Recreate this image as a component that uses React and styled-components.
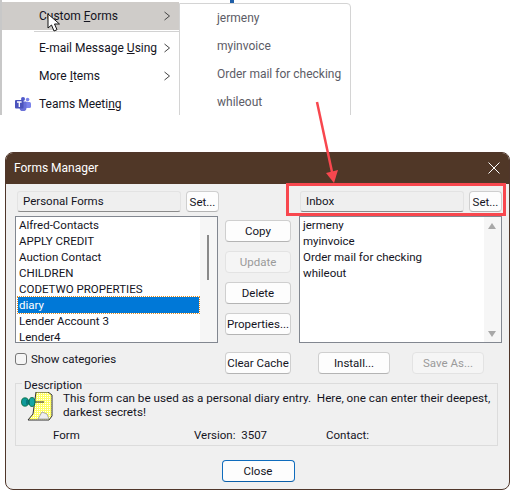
import React from "react";
import styled, { createGlobalStyle } from "styled-components";

const Global = createGlobalStyle`
  html, body {
    margin: 0;
    padding: 0;
    background: #fff;
  }
  body {
    font-family: Roboto, "Noto Sans", "Liberation Sans", sans-serif;
    font-size: 12px;
    color: #14141e;
  }
`;

const Page = styled.div`
  position: relative;
  width: 510px;
  height: 490px;
  overflow: hidden;
  background: #fff;
`;

const MenuArea = styled.div`
  position: relative;
  display: flex;
  height: 115px;
  overflow: hidden;
`;

const BehindStrip = styled.div`
  position: absolute;
  top: -10px;
  left: 230px;
  display: flex;
  align-items: flex-end;
  height: 13px;
  font-weight: 500;
  color: #1f4e8c;
  white-space: nowrap;
`;

const BehindBlock = styled.span`
  width: 4px;
  height: 3px;
  margin-right: 24px;
  background: #1f5fa8;
`;

const BehindWord = styled.span`
  margin-right: 20px;
`;

const MainMenu = styled.div`
  width: 177px;
  padding-top: 2px;
  border-left: 2px solid #c8c8c8;
  background: #fff;
`;

const MenuRow = styled.div`
  display: grid;
  grid-template-columns: 37px 1fr 16px;
  align-items: center;
  height: 28px;
  background: ${(p) => (p.$active ? "#cfccc9" : "transparent")};
  white-space: nowrap;
`;

const MenuIcon = styled.span`
  display: flex;
  justify-content: flex-end;
  padding-right: 8px;
`;

const Sep = styled.div`
  height: 1px;
  margin: 1px 0 2px 32px;
  background: #d2d2d2;
`;

const SubMenu = styled.div`
  position: relative;
  width: 172px;
  height: 120px;
  margin-top: 3px;
  box-sizing: border-box;
  padding-left: 37px;
  background: #fff;
  border: 1px solid #d4d4d4;
  border-top-right-radius: 4px;
`;

const SubRow = styled.div`
  height: 28px;
  line-height: 28px;
  color: #5c5c66;
  white-space: nowrap;
`;

const Dialog = styled.div`
  width: 505px;
  height: 338px;
  margin: 37px 0 0 5px;
  box-sizing: border-box;
  background: #f0f0f0;
  border: 1px solid #50362a;
  border-radius: 8px;
  overflow: hidden;
  font-size: 11.5px;
`;

const TitleBar = styled.div`
  display: flex;
  align-items: center;
  justify-content: space-between;
  height: 31px;
  padding: 0 9px 2px 8px;
  box-sizing: border-box;
  background: #503727;
  color: #fff;
  font-size: 12px;
`;

const Body = styled.div`
  padding: 7px 7px 0 9px;
`;

const Columns = styled.div`
  display: grid;
  grid-template-columns: 204px 80px 204px;
`;

const FormColumn = styled.div`
  display: flex;
  flex-direction: column;
  gap: 4px;
`;

const FieldRow = styled.div`
  display: flex;
  gap: 5px;
  padding-left: ${(p) => (p.$inset ? "1px" : "2px")};
`;

const Field = styled.div`
  width: 164px;
  height: 21px;
  box-sizing: border-box;
  padding-left: 5px;
  line-height: 19px;
  background: #efefef;
  border: 1px solid #e3e3e3;
  border-bottom: 1px solid #8a8a8a;
  border-radius: 3px;
  white-space: nowrap;
`;

const Button = styled.div`
  display: flex;
  align-items: center;
  justify-content: center;
  width: ${(p) => p.$w || 66}px;
  height: 22px;
  box-sizing: border-box;
  border: 1px solid ${(p) =>
    p.$primary ? "#0f6cbd" : p.$off ? "#e3e3e3" : "#cfcfcf"};
  border-bottom-color: ${(p) =>
    p.$primary ? "#0a5ea8" : p.$off ? "#e3e3e3" : "#b4b4b4"};
  border-radius: 4px;
  color: ${(p) => (p.$off ? "#9a9a9a" : "#14141e")};
  background: ${(p) => (p.$off ? "#f5f5f5" : "#fdfdfd")};
  white-space: nowrap;
`;

const SmallButton = styled(Button)`
  width: 33px;
  height: 21px;
`;

const ListBox = styled.div`
  position: relative;
  width: 203px;
  height: 127px;
  box-sizing: border-box;
  padding: 0 1px;
  background: #fff;
  border: 1px solid #828790;
  overflow: hidden;
`;

const ListItem = styled.div`
  height: 16px;
  line-height: 16px;
  padding-left: 2px;
  white-space: nowrap;
  ${(p) =>
    p.$selected &&
    `
    width: 180px;
    margin-left: 1px;
    padding-left: 1px;
    color: #fff;
    background: #0078d7;
    outline: 1px dotted #e08a1e;
  `}
`;

const ScrollTrack = styled.div`
  position: absolute;
  top: 0;
  right: 0;
  bottom: 0;
  width: 17px;
  background: #f6f6f6;
`;

const ScrollThumb = styled.div`
  position: absolute;
  top: 18px;
  left: 7px;
  width: 2px;
  height: 45px;
  background: #8a8a8a;
`;

const ArrowUp = styled.div`
  position: absolute;
  left: 4px;
  ${(p) => (p.$down ? "bottom: 5px;" : "top: 6px;")}
  width: 0;
  height: 0;
  border-left: 4px solid transparent;
  border-right: 4px solid transparent;
  ${(p) => (p.$down ? "border-top" : "border-bottom")}: 6px solid #a8a8a8;
`;

const ActionColumn = styled.div`
  display: flex;
  flex-direction: column;
  gap: 9px;
  padding: 29px 0 0 6px;
`;

const BottomRow = styled.div`
  display: grid;
  grid-template-columns: 210px 93px 94px 72px;
  align-items: center;
  height: 22px;
  margin-top: 9px;
`;

const CheckLabel = styled.label`
  display: flex;
  align-items: center;
  gap: 4px;
  margin-top: -8px;
`;

const CheckBox = styled.span`
  width: 10px;
  height: 10px;
  background: #f5f5f5;
  border: 1px solid #777;
  border-radius: 3px;
`;

const GroupBox = styled.div`
  position: relative;
  width: 483px;
  height: 63px;
  box-sizing: border-box;
  margin: 9px 0 0;
  padding: 7px 0 0 5px;
  border: 1px solid #dcdcdc;
`;

const GroupLabel = styled.span`
  position: absolute;
  top: -6px;
  left: 6px;
  padding: 0 2px;
  line-height: 14px;
  background: #f0f0f0;
`;

const DescRow = styled.div`
  display: flex;
  gap: 10px;
  height: 36px;
`;

const DescText = styled.div`
  width: 434px;
  margin-top: 1px;
  font-size: 11.7px;
  line-height: 13.5px;
  white-space: pre;
`;

const MetaRow = styled.div`
  display: grid;
  grid-template-columns: 141px 132px 1fr;
  padding-left: 32px;
  line-height: 16px;
  white-space: pre;
`;

const Footer = styled.div`
  display: flex;
  justify-content: center;
  margin: 14px 0 0 -1px;
`;

const Overlay = styled.svg`
  position: absolute;
  left: 0;
  top: 0;
  pointer-events: none;
`;

const HighlightBox = styled.div`
  position: absolute;
  left: 286px;
  top: 183px;
  width: 220px;
  height: 33px;
  box-sizing: border-box;
  border: 3px solid #f8474e;
`;

const Cursor = styled.svg`
  position: absolute;
  left: 47px;
  top: 13px;
`;

const TeamsIcon = () => (
  <svg width="16" height="14" viewBox="0 0 16 14">
    <circle cx="12.6" cy="2.6" r="1.8" fill="#7b83eb" />
    <rect x="10" y="5" width="6" height="6" rx="1.5" fill="#7b83eb" />
    <circle cx="8" cy="2" r="2" fill="#5059c9" />
    <path d="M4 4.5h7.5v6a3.5 3.5 0 0 1-7 .5z" fill="#6a71d8" />
    <rect x="0" y="3" width="8.5" height="8.5" rx="1" fill="#4b53bc" />
    <path d="M2 5h4.600M4.300 5v5" stroke="#fff" strokeWidth="1.3" />
  </svg>
);

const Chevron = () => (
  <svg width="8" height="10" viewBox="0 0 8 10">
    <path d="M1.500 1l5 4-5 4" fill="none" stroke="#444" strokeWidth="1" />
  </svg>
);

const CloseIcon = () => (
  <svg width="12" height="12" viewBox="0 0 12 12">
    <path d="M.5.5l11 11M11.500.5l-11 11" stroke="#fff" strokeWidth="1" />
  </svg>
);

const DiaryIcon = () => (
  <svg width="32" height="30" viewBox="0 0 32 30" style={{ flex: "none" }}>
    <defs>
      <pattern id="dots" width="2" height="2" patternUnits="userSpaceOnUse">
        <rect width="2" height="2" fill="#ffff66" />
        <rect width="1" height="1" fill="#fff" />
      </pattern>
    </defs>
    <path d="M15 1h12l4 3v21l-3 4H7l5-6z" fill="url(#dots)" stroke="#333" strokeWidth="1" />
    <path d="M17 28l4-7 5 2 2 5z" fill="#eee" stroke="#999" strokeWidth="0.8" />
    <path d="M14 11h9" stroke="#222" strokeWidth="1" />
    <ellipse cx="4" cy="11" rx="3.500" ry="4.200" fill="#0f9a9a" stroke="#063" strokeWidth="0.8" />
    <rect x="5" y="9" width="5" height="4.500" fill="#08787c" />
    <ellipse cx="11" cy="11" rx="3" ry="4.500" fill="#13a5a5" stroke="#063" strokeWidth="0.8" />
  </svg>
);

const personalForms = [
  "Alfred-Contacts",
  "APPLY CREDIT",
  "Auction Contact",
  "CHILDREN",
  "CODETWO PROPERTIES",
  "diary",
  "Lender Account 3",
  "Lender4",
];

const inboxForms = ["jermeny", "myinvoice", "Order mail for checking", "whileout"];

export default function App() {
  return (
    <Page>
      <Global />
      <MenuArea>
        <BehindStrip>
          <BehindBlock />
          <BehindWord>TOMI TOMI</BehindWord>
          <span>TOMI</span>
        </BehindStrip>
        <MainMenu>
          <MenuRow $active>
            <span />
            <span>
              Custom <u>F</u>orms
            </span>
            <Chevron />
          </MenuRow>
          <Sep />
          <MenuRow>
            <span />
            <span>
              E-mail Message <u>U</u>sing
            </span>
            <Chevron />
          </MenuRow>
          <MenuRow>
            <span />
            <span>
              More <u>I</u>tems
            </span>
            <Chevron />
          </MenuRow>
          <MenuRow>
            <MenuIcon>
              <TeamsIcon />
            </MenuIcon>
            <span>
              Teams Meeti<u>n</u>g
            </span>
          </MenuRow>
        </MainMenu>
        <SubMenu>
          <SubRow>jermeny</SubRow>
          <SubRow>myinvoice</SubRow>
          <SubRow>Order mail for checking</SubRow>
          <SubRow>whileout</SubRow>
        </SubMenu>
      </MenuArea>

      <Dialog>
        <TitleBar>
          <span>Forms Manager</span>
          <CloseIcon />
        </TitleBar>
        <Body>
          <Columns>
            <FormColumn>
              <FieldRow>
                <Field>Personal Forms</Field>
                <SmallButton>Set...</SmallButton>
              </FieldRow>
              <ListBox>
                {personalForms.map((name) => (
                  <ListItem key={name} $selected={name === "diary"}>
                    {name}
                  </ListItem>
                ))}
                <ScrollTrack>
                  <ScrollThumb />
                </ScrollTrack>
              </ListBox>
            </FormColumn>
            <ActionColumn>
              <Button>Copy</Button>
              <Button $off>Update</Button>
              <Button>Delete</Button>
              <Button>Properties...</Button>
            </ActionColumn>
            <FormColumn>
              <FieldRow $inset>
                <Field>Inbox</Field>
                <SmallButton>Set...</SmallButton>
              </FieldRow>
              <ListBox>
                {inboxForms.map((name) => (
                  <ListItem key={name}>{name}</ListItem>
                ))}
                <ScrollTrack>
                  <ArrowUp />
                  <ArrowUp $down />
                </ScrollTrack>
              </ListBox>
            </FormColumn>
          </Columns>

          <BottomRow>
            <CheckLabel>
              <CheckBox />
              Show categories
            </CheckLabel>
            <Button>Clear Cache</Button>
            <Button $w={72}>Install...</Button>
            <Button $w={72} $off>
              Save As...
            </Button>
          </BottomRow>

          <GroupBox>
            <GroupLabel>Description</GroupLabel>
            <DescRow>
              <DiaryIcon />
              <DescText>
                {"This form can be used as a personal diary entry.  Here, one can enter their deepest,\ndarkest secrets!"}
              </DescText>
            </DescRow>
            <MetaRow>
              <span>Form</span>
              <span>{"Version:  3507"}</span>
              <span>Contact:</span>
            </MetaRow>
          </GroupBox>

          <Footer>
            <Button $primary $w={73}>
              Close
            </Button>
          </Footer>
        </Body>
      </Dialog>

      <Overlay width="510" height="490" viewBox="0 0 510 490">
        <path d="M317 102l15 70" stroke="#f8474e" strokeWidth="2.500" fill="none" />
        <path d="M326 173l12-3-4 13z" fill="#f8474e" />
      </Overlay>
      <HighlightBox />
      <Cursor width="14" height="20" viewBox="0 0 14 20">
        <path
          d="M1 1v14l3.500-3 2.500 6 3-1.300-2.500-5.700h5z"
          fill="#fff"
          stroke="#111"
          strokeWidth="1"
        />
      </Cursor>
    </Page>
  );
}
